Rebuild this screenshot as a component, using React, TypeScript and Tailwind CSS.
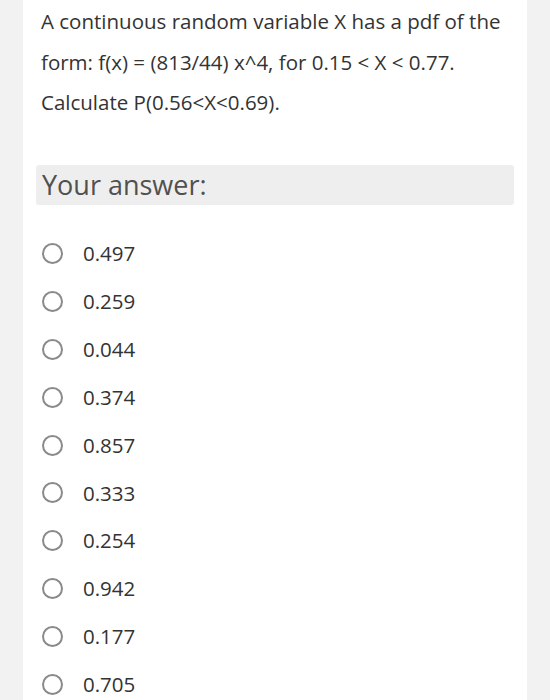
import React from "react";

const options = [
  "0.497",
  "0.259",
  "0.044",
  "0.374",
  "0.857",
  "0.333",
  "0.254",
  "0.942",
  "0.177",
  "0.705",
];

const App: React.FC = () => {
  return (
    <div
      className="min-h-[700px] bg-[#f2f2f2]"
      style={{ fontFamily: '"Open Sans", sans-serif' }}
    >
      <div className="mx-[23px] min-h-[700px] bg-white pt-[1px]">
        {/* Question */}
        <p className="pl-[18px] pr-[4px] text-[20.5px] leading-[40.5px] text-[#333]">
          A continuous random variable X has a pdf of the form: f(x) =
          (813/44) x^4, for 0.15 &lt; X &lt; 0.77. Calculate P(0.56&lt;X&lt;0.69).
        </p>

        {/* Answer header */}
        <div className="mx-[13px] mt-[42px] h-[40px] rounded-[3px] bg-[#eeeeee] pl-[6px] text-[27px] leading-[40px] text-[#505050]">
          Your answer:
        </div>

        {/* Options */}
        <div className="mt-[25px] flex flex-col">
          {options.map((o) => (
            <label
              key={o}
              className="flex h-[47.9px] items-center pl-[19px] text-[20.5px] text-[#333]"
            >
              <span className="h-[21px] w-[21px] rounded-full border-2 border-[#8a8a8a]" />
              <span className="ml-[20px]">{o}</span>
            </label>
          ))}
        </div>
      </div>
    </div>
  );
};

export default App;
